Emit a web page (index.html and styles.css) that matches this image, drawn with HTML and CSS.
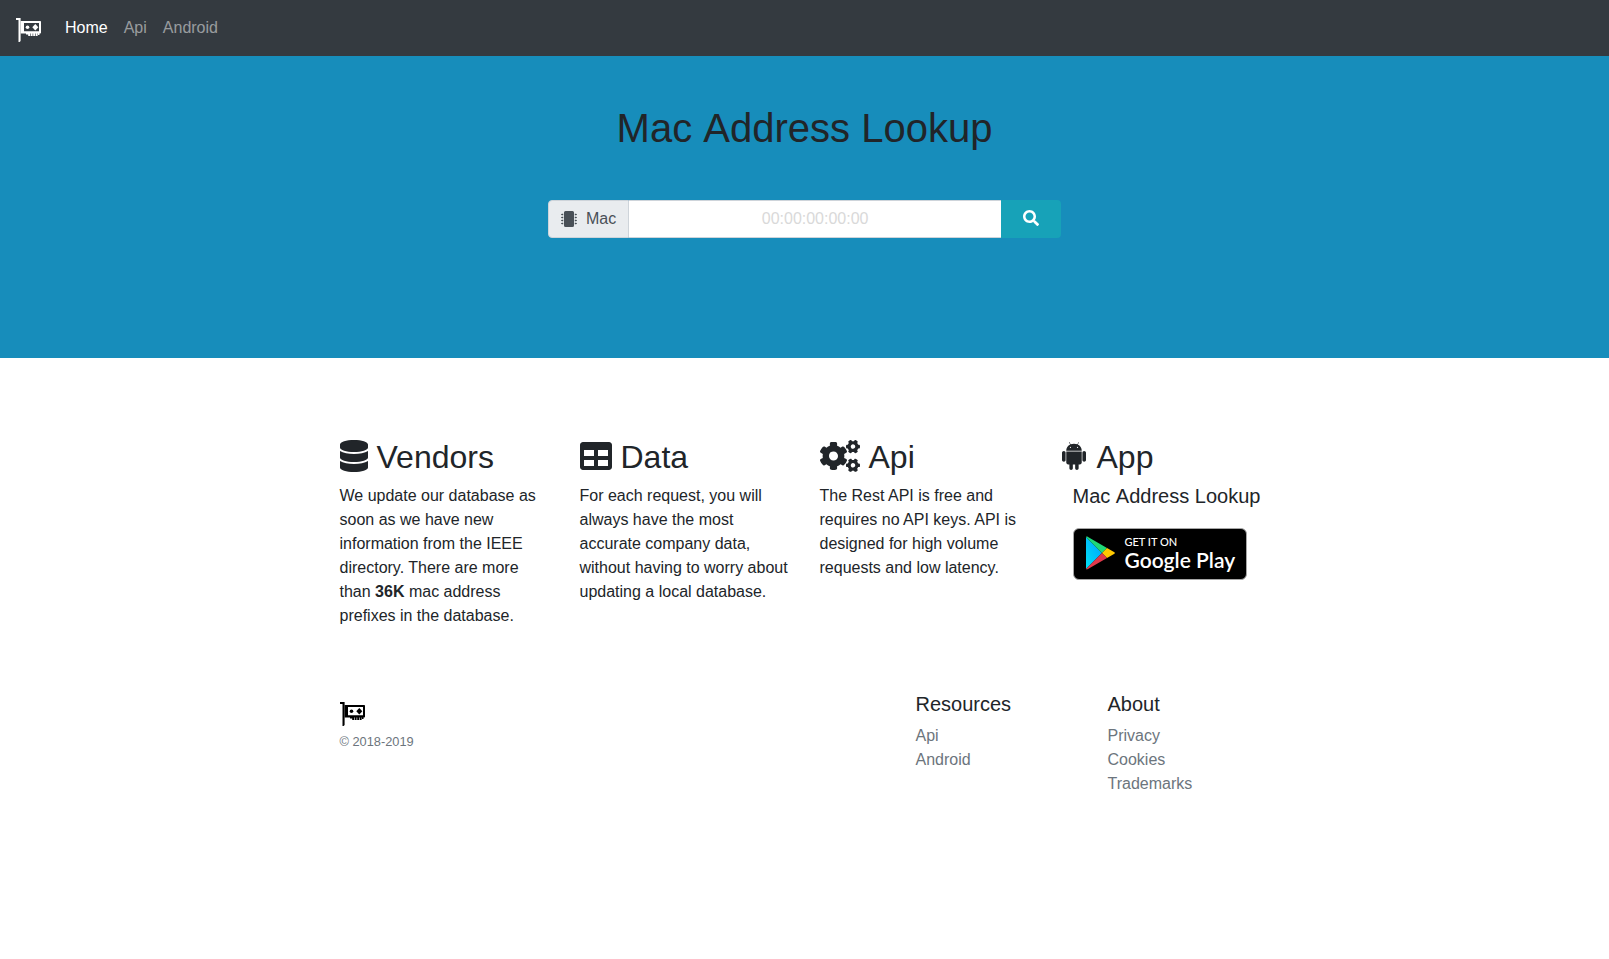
FILE: index.html
```
<!DOCTYPE html>
<html lang="en">
<head>
    <meta charset="UTF-8">
    <meta name="viewport" content="width=device-width, initial-scale=1">
    <title>Mac Address Lookup</title>
    <link rel="stylesheet" href="styles.css">
</head>
<body>
    <!-- shared symbols -->
    <svg class="symbols" aria-hidden="true">
        <symbol id="logo" viewBox="0 0 25 24">
            <path fill="currentColor" d="M0 0h4.600v23l-1 1H2.500V2H0z"/>
            <path fill="currentColor" fill-rule="evenodd" d="M4.600 3H24c.6 0 1 .4 1 1v10.500c0 .6-.4 1-1 1H4.600zM8 5v8.300h15V5z"/>
            <path fill="currentColor" d="M10 15h2.500v1.500H10zM12.200 15h1.900v3h-1.900zM14.700 15h1.900v3h-1.900zM17.200 15h1.900v3h-1.900zM19.700 15h1.900v3h-1.900zM22 15h1.500v2H22z"/>
            <circle fill="currentColor" cx="11.500" cy="9.200" r="1.800"/>
            <path fill="currentColor" d="M19.300 6l3 3.200-3 3.200-3-3.200z"/>
        </symbol>
    </svg>

    <nav class="navbar">
        <a class="navbar-brand" href="#" aria-label="Mac Address Lookup"><svg class="logo"><use href="#logo"/></svg></a>
        <a class="nav-link active" href="#">Home</a>
        <a class="nav-link" href="#">Api</a>
        <a class="nav-link" href="#">Android</a>
    </nav>

    <header class="hero">
        <h1>Mac Address Lookup</h1>
        <form class="input-group">
            <label class="input-label" for="mac">
                <svg class="icon" viewBox="0 0 512 512"><path fill="currentColor" d="M144 0h224a48 48 0 0 1 48 48v416a48 48 0 0 1-48 48H144a48 48 0 0 1-48-48V48a48 48 0 0 1 48-48zM440 88h48v12h24v24h-24v12h-48zM440 184h48v12h24v24h-24v12h-48zM440 280h48v12h24v24h-24v12h-48zM440 376h48v12h24v24h-24v12h-48zM72 88H24v12H0v24h24v12h48zM72 184H24v12H0v24h24v12h48zM72 280H24v12H0v24h24v12h48zM72 376H24v12H0v24h24v12h48z"/></svg>
                Mac
            </label>
            <input class="input-control" type="text" id="mac" placeholder="00:00:00:00:00">
            <button class="btn-search" type="submit" aria-label="Search">
                <svg class="icon" viewBox="0 0 512 512"><path fill="currentColor" d="M505 442.700L405.300 343c-4.500-4.500-10.600-7-17-7H372c27.600-35.300 44-79.700 44-128C416 93.100 322.900 0 208 0S0 93.100 0 208s93.100 208 208 208c48.300 0 92.700-16.400 128-44v16.300c0 6.400 2.500 12.500 7 17l99.700 99.700c9.400 9.400 24.600 9.400 33.900 0l28.300-28.300c9.400-9.400 9.400-24.600.1-34zM208 336c-70.700 0-128-57.200-128-128 0-70.700 57.200-128 128-128 70.700 0 128 57.200 128 128 0 70.700-57.200 128-128 128z"/></svg>
            </button>
        </form>
    </header>

    <main class="container features">
        <section>
            <h2><svg class="icon icon-narrow" viewBox="0 0 448 512"><path fill="currentColor" d="M448 73.143v45.714C448 159.143 347.667 192 224 192S0 159.143 0 118.857V73.143C0 32.857 100.333 0 224 0s224 32.857 224 73.143zM448 176v102.857C448 319.143 347.667 352 224 352S0 319.143 0 278.857V176c48.125 33.143 136.208 48.572 224 48.572S399.874 209.143 448 176zm0 160v102.857C448 479.143 347.667 512 224 512S0 479.143 0 438.857V336c48.125 33.143 136.208 48.572 224 48.572S399.874 369.143 448 336z"/></svg> Vendors</h2>
            <p>We update our database as soon as we have new information from the IEEE directory. There are more than <b>36K</b> mac address prefixes in the database.</p>
        </section>
        <section>
            <h2><svg class="icon" viewBox="0 0 512 512"><path fill="currentColor" d="M464 32H48C21.490 32 0 53.490 0 80v352c0 26.510 21.490 48 48 48h416c26.510 0 48-21.490 48-48V80c0-26.510-21.490-48-48-48zM224 416H64v-96h160v96zm0-160H64v-96h160v96zm224 160H288v-96h160v96zm0-160H288v-96h160v96z"/></svg> Data</h2>
            <p>For each request, you will always have the most accurate company data, without having to worry about updating a local database.</p>
        </section>
        <section>
            <h2><svg class="icon icon-wide" viewBox="0 0 640 512">
                <path id="small-cog" fill="currentColor" d="M512.1 191l-8.2 14.3c-3 5.300-9.400 7.500-15.100 5.400-11.800-4.400-22.600-10.700-32.100-18.600-4.600-3.800-5.800-10.500-2.800-15.700l8.200-14.300c-6.900-8-12.300-17.300-15.900-27.400h-16.500c-6 0-11.200-4.300-12.200-10.300-2-12-2.100-24.600 0-37.100 1-6 6.200-10.400 12.200-10.400h16.500c3.600-10.100 9-19.400 15.900-27.400l-8.200-14.300c-3-5.200-1.900-11.900 2.800-15.700 9.500-7.900 20.400-14.200 32.100-18.600 5.700-2.100 12.100.1 15.100 5.400l8.200 14.300c10.500-1.900 21.200-1.900 31.700 0L552 6.300c3-5.300 9.400-7.500 15.100-5.400 11.800 4.400 22.600 10.700 32.100 18.600 4.600 3.800 5.800 10.500 2.800 15.700l-8.200 14.300c6.900 8 12.300 17.300 15.900 27.400h16.500c6 0 11.200 4.300 12.200 10.300 2 12 2.100 24.600 0 37.100-1 6-6.200 10.400-12.200 10.400h-16.500c-3.600 10.100-9 19.400-15.900 27.400l8.200 14.300c3 5.200 1.900 11.900-2.800 15.700-9.500 7.900-20.400 14.200-32.100 18.600-5.700 2.100-12.100-.1-15.100-5.400l-8.200-14.300c-10.400 1.900-21.200 1.900-31.700 0zm-10.500-58.800c38.500 29.600 82.400-14.300 52.800-52.800-38.500-29.700-82.400 14.300-52.800 52.800z"/>
                <use href="#small-cog" y="299"/>
                <path fill="currentColor" d="M386.300 286.100l33.700 16.800c10.100 5.800 14.500 18.100 10.500 29.100-8.900 24.200-26.400 46.400-42.600 65.800-7.400 8.900-20.200 11.100-30.300 5.300l-29.100-16.800c-16 13.700-34.600 24.600-54.900 31.700v33.600c0 11.600-8.300 21.600-19.700 23.600-24.600 4.200-50.400 4.400-75.900 0-11.500-2-20-11.900-20-23.600V418c-20.300-7.200-38.900-18-54.900-31.700L74 403c-10 5.800-22.900 3.600-30.300-5.300-16.200-19.400-33.300-41.600-42.200-65.700-4-10.900.4-23.200 10.500-29.100l33.300-16.800c-3.900-20.900-3.900-42.400 0-63.400L12 205.800c-10.100-5.800-14.600-18.100-10.500-29 8.900-24.200 26-46.400 42.200-65.800 7.400-8.900 20.200-11.100 30.300-5.300l29.100 16.800c16-13.700 34.600-24.600 54.900-31.700V57.100c0-11.500 8.200-21.500 19.600-23.500 24.600-4.200 50.500-4.400 76-.1 11.500 2 20 11.900 20 23.600v33.600c20.300 7.200 38.900 18 54.900 31.700l29.100-16.800c10-5.800 22.900-3.600 30.300 5.300 16.200 19.400 33.200 41.600 42.100 65.800 4 10.900.1 23.200-10 29.100l-33.700 16.800c3.900 21 3.900 42.500 0 63.500zm-117.600 21.100c59.200-77-28.700-164.900-105.700-105.700-59.200 77 28.700 164.900 105.700 105.700z"/>
            </svg> Api</h2>
            <p>The Rest API is free and requires no API keys. API is designed for high volume requests and low latency.</p>
        </section>
        <section>
            <h2><svg class="icon icon-narrow" viewBox="0 0 448 512"><path fill="currentColor" d="M89.600 204.500v115.800c0 15.400-12.100 27.700-27.500 27.700-15.300 0-30.100-12.400-30.100-27.700V204.500c0-15.100 14.800-27.500 30.100-27.500 15.100 0 27.500 12.400 27.500 27.500zm10.800 157c0 16.400 13.200 29.600 29.600 29.600h19.900l.3 61.100c0 36.900 55.200 36.600 55.200 0v-61.100h37.200v61.100c0 36.700 55.500 36.800 55.500 0v-61.100h20.200c16.200 0 29.400-13.200 29.400-29.600V182.100H100.400v179.400zm248-189.100H99.300c0-42.800 25.600-80 63.600-99.400l-19.100-35.300c-2.800-4.900 4.300-8 6.700-3.800l19.400 35.600c34.900-15.500 75-14.700 108.300 0L297.500 34c2.500-4.300 9.500-1.100 6.700 3.800L285.100 73c37.700 19.400 63.300 56.600 63.300 99.400zm-170.700-55.500c0-5.700-4.600-10.500-10.500-10.500-5.700 0-10.200 4.800-10.200 10.500s4.600 10.500 10.200 10.500c5.900 0 10.500-4.800 10.500-10.500zm113.400 0c0-5.700-4.600-10.500-10.200-10.500-5.900 0-10.500 4.800-10.500 10.500s4.600 10.500 10.500 10.500c5.600 0 10.200-4.800 10.200-10.500zm94.800 60.100c-15.100 0-27.500 12.100-27.500 27.500v115.800c0 15.400 12.400 27.700 27.500 27.700 15.400 0 30.100-12.400 30.100-27.700V204.500c0-15.400-14.800-27.500-30.100-27.500z"/></svg> App</h2>
            <div class="app">
                <h5>Mac Address Lookup</h5>
                <a class="play-badge" href="#">
                    <svg class="play-logo" viewBox="0 0 30 34">
                        <linearGradient id="play-blue" x1="1" y1="0" x2="0" y2="1">
                            <stop offset="0" stop-color="#00a0ff"/>
                            <stop offset="1" stop-color="#00e1f5"/>
                        </linearGradient>
                        <path fill="url(#play-blue)" d="M1 1v32l16-16z"/>
                        <path fill="#1fd978" d="M1 1c.5-.6 1.300-.5 2 0l19 11-5 5z"/>
                        <path fill="#ffc800" d="M22 12l7 4c1.200.7 1.200 1.400 0 2l-7 4-5-5z"/>
                        <path fill="#e0384b" d="M1 33c.5.6 1.300.5 2 0l19-11-5-5z"/>
                    </svg>
                    <span class="play-text">
                        <span class="play-small">GET IT ON</span>
                        <span class="play-name">Google Play</span>
                    </span>
                </a>
            </div>
        </section>
    </main>

    <footer class="container footer">
        <div class="footer-brand">
            <svg class="logo"><use href="#logo"/></svg>
            <small>© 2018-2019</small>
        </div>
        <div>
            <h5>Resources</h5>
            <ul>
                <li><a href="#">Api</a></li>
                <li><a href="#">Android</a></li>
            </ul>
        </div>
        <div>
            <h5>About</h5>
            <ul>
                <li><a href="#">Privacy</a></li>
                <li><a href="#">Cookies</a></li>
                <li><a href="#">Trademarks</a></li>
            </ul>
        </div>
    </footer>
</body>
</html>
```
FILE: styles.css
```
* {
    box-sizing: border-box;
}

body {
    margin: 0;
    font-family: "Liberation Sans", Arial, sans-serif;
    font-size: 16px;
    line-height: 24px;
    color: #212529;
    background-color: #fff;
}

h1, h2, h5 {
    margin: 0 0 8px;
    font-weight: 500;
    line-height: 1.2;
}

h1, h5 {
    font-kerning: none;
}

h2 {
    display: flex;
    align-items: baseline;
    gap: 9px;
    font-size: 32px;
}

h5 {
    font-size: 20px;
}

p {
    margin: 0 0 16px;
}

a {
    text-decoration: none;
}

.symbols {
    display: none;
}

.icon {
    width: 1em;
    height: 1em;
    vertical-align: -0.125em;
}

h2 .icon {
    align-self: center;
    margin-bottom: 2px;
}

.icon-narrow {
    width: 0.875em;
}

.icon-wide {
    width: 1.25em;
}

.logo {
    display: block;
    width: 25px;
    height: 24px;
}

/* Navbar */
.navbar {
    display: flex;
    align-items: center;
    min-height: 56px;
    padding: 8px 16px;
    background-color: #343a40;
}

.navbar-brand {
    margin-right: 16px;
    padding-top: 4px;
    color: #fff;
}

.nav-link {
    padding: 8px;
    color: rgba(255, 255, 255, 0.5);
}

.nav-link.active {
    color: #fff;
}

/* Search */
.hero {
    padding: 48px 16px 120px;
    text-align: center;
    background-color: #178dbb;
}

.hero h1 {
    margin-bottom: 48px;
    font-size: 40px;
}

.input-group {
    display: flex;
    max-width: 513px;
    height: 38px;
    margin: 0 auto;
}

.input-label {
    display: flex;
    align-items: center;
    gap: 9px;
    padding: 0 12px;
    border: 1px solid #ced4da;
    border-radius: 4px 0 0 4px;
    color: #495057;
    background-color: #e9ecef;
}

.input-control {
    flex: 1;
    min-width: 0;
    padding: 6px 12px;
    border: 1px solid #ced4da;
    border-left: 0;
    border-right: 0;
    font: inherit;
    text-align: center;
    color: #495057;
}

.input-control::placeholder {
    color: #d9d9d9;
    opacity: 1;
}

.btn-search {
    width: 60px;
    padding: 0;
    border: 0;
    border-radius: 0 4px 4px 0;
    font-size: 16px;
    color: #fff;
    background-color: #17a2b8;
    cursor: pointer;
}

/* Content */
.container {
    display: grid;
    column-gap: 30px;
    max-width: 960px;
    margin: 0 auto;
    padding: 0 15px;
}

.features {
    grid-template-columns: repeat(4, 1fr);
    padding-top: 80px;
}

.app {
    padding-left: 13px;
    white-space: nowrap;
}

.play-badge {
    display: inline-flex;
    align-items: center;
    gap: 10px;
    width: 174px;
    height: 52px;
    margin-top: 12px;
    padding: 0 0 2px 11px;
    border: 1px solid #a6a6a6;
    border-radius: 6px;
    font-family: Lato, sans-serif;
    color: #fff;
    background-color: #000;
}

.play-logo {
    width: 30px;
    height: 34px;
}

.play-text {
    display: flex;
    flex-direction: column;
}

.play-small {
    font-size: 11px;
    font-weight: 500;
    line-height: 13px;
}

.play-name {
    font-size: 21px;
    font-weight: 600;
    line-height: 24px;
}

/* Footer */
.footer {
    grid-template-columns: repeat(5, 1fr);
    padding-top: 48px;
    padding-bottom: 48px;
}

.footer-brand {
    grid-column: span 3;
    padding-top: 10px;
    color: #000;
}

.footer small {
    display: block;
    margin-top: 4px;
    font-size: 80%;
    color: #6c757d;
}

.footer ul {
    margin: 0;
    padding: 0;
    list-style: none;
}

.footer a {
    color: #6c757d;
}
```
